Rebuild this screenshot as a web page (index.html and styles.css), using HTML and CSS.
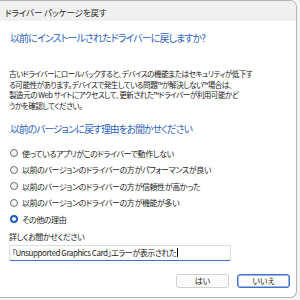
FILE: index.html
```html
<!DOCTYPE html>
<html lang="ja">
<head>
  <meta charset="UTF-8" />
  <title>ドライバー パッケージを戻す</title>
  <link rel="stylesheet" href="styles.css">
</head>
<body>
  <div class="window">
    <div class="titlebar">ドライバー パッケージを戻す</div>
    <div class="content">
      <h1 class="heading">以前にインストールされたドライバーに戻しますか?</h1>
      <p class="intro">古いドライバーにロールバックすると、デバイスの機能またはセキュリティが低下す<br>る可能性があります。デバイスで発生している問題™が解決しない™場合は、<br>製造元の Web サイトにアクセスして、更新された™ドライバーが利用可能かど<br>うかを確認してください。</p>
      <h2 class="subheading">以前のバージョンに戻す理由をお聞かせください</h2>
      <div class="options">
        <label class="option"><span class="radio"></span>使っているアプリがこのドライバーで動作しない</label>
        <label class="option"><span class="radio"></span>以前のバージョンのドライバーの方がパフォーマンスが良い</label>
        <label class="option"><span class="radio"></span>以前のバージョンのドライバーの方が信頼性が高かった</label>
        <label class="option"><span class="radio"></span>以前のバージョンのドライバーの方が機能が多い</label>
        <label class="option"><span class="radio checked"></span>その他の理由</label>
      </div>
      <div class="detail-label">詳しくお聞かせください</div>
      <div class="textbox">「Unsupported Graphics Card」エラーが表示された<span class="caret"></span></div>
      <div class="buttons">
        <button class="btn">はい</button>
        <button class="btn default">いいえ</button>
      </div>
    </div>
  </div>
</body>
</html>
```

FILE: styles.css
```css
body {
  margin: 0;
  padding: 0;
  background-color: #f4f4f4;
  font-family: "Noto Sans CJK JP", "Noto Sans", sans-serif;
  font-feature-settings: "palt";
  color: #1b1b1b;
}

.window {
  width: 296px;
  height: 296px;
  background-color: #fff;
  border: 1px solid #b4b4b4;
  border-left: none;
  border-radius: 0 7px 7px 0;
  overflow: hidden;
  display: flex;
  flex-direction: column;
}

.titlebar {
  height: 20px;
  line-height: 22px;
  background-color: #f0f0f0;
  font-size: 8.5px;
  letter-spacing: -0.1px;
  padding-left: 5px;
  color: #2a2a2a;
}

.content {
  flex: 1;
  padding: 0 0 0 9px;
  display: flex;
  flex-direction: column;
  letter-spacing: -0.4px;
}

.heading {
  margin: 9px 0 0 1px;
  font-size: 10px;
  letter-spacing: -0.9px;
  font-weight: normal;
  color: #2f62c0;
  line-height: 16px;
}

.intro {
  margin: 23px 0 0 0;
  white-space: nowrap;
  font-size: 7.6px;
  letter-spacing: -0.5px;
  line-height: 10.7px;
  color: #1b1b1b;
}

.subheading {
  margin: 10px 0 0 1px;
  font-size: 9.8px;
  letter-spacing: -0.95px;
  font-weight: normal;
  color: #2f62c0;
  line-height: 14px;
}

.options {
  margin-top: 9px;
  display: flex;
  flex-direction: column;
}

.option {
  display: flex;
  align-items: center;
  height: 16.6px;
  font-size: 8px;
  color: #1b1b1b;
}

.radio {
  width: 6px;
  height: 6px;
  border: 1px solid #6b6b6b;
  border-radius: 50%;
  margin: 0 4px 0 1px;
  background-color: #f7f7f7;
}

.radio.checked {
  width: 4px;
  height: 4px;
  border: 2px solid #1f5fbf;
  background-color: #fff;
}

.detail-label {
  margin-top: 2px;
  font-size: 8px;
  line-height: 14px;
}

.textbox {
  width: 218px;
  height: 14px;
  margin-top: 1px;
  padding-left: 2px;
  border: 1px solid #dcdcdc;
  border-bottom: 1px solid #3a6fc4;
  border-radius: 2px;
  font-size: 8px;
  letter-spacing: -0.45px;
  line-height: 14px;
  display: flex;
  align-items: center;
}

.caret {
  display: inline-block;
  width: 1px;
  height: 9px;
  background-color: #000;
  margin-left: 1px;
}

.buttons {
  display: flex;
  justify-content: flex-end;
  gap: 8px;
  margin-top: 13px;
  padding-right: 6px;
}

.btn {
  width: 53px;
  height: 14px;
  padding: 0;
  font-family: inherit;
  font-feature-settings: "palt";
  font-size: 8px;
  line-height: 12px;
  color: #1b1b1b;
  background-color: #fbfbfb;
  border: 1px solid #d0d0d0;
  border-radius: 3px;
}

.btn.default {
  border-color: #3f74c8;
  box-shadow: inset 0 0 0 0.5px #3f74c8;
}
```
